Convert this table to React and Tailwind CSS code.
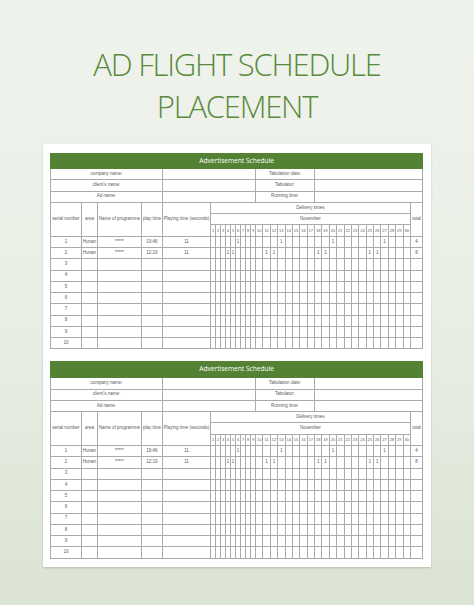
import React from 'react';

const days = Array.from({ length: 30 }, (_, i) => i + 1);

// data rows: marks are the days carrying a "1"
const entries = [
  { no: 1, area: 'Hunan', name: '*****', play: '19:46', secs: '11', marks: [6, 13, 20, 27], total: 4 },
  { no: 2, area: 'Hunan', name: '*****', play: '12:19', secs: '11', marks: [4, 5, 11, 12, 18, 19, 25, 26], total: 8 },
  ...Array.from({ length: 8 }, (_, i) => ({ no: i + 3, marks: [] })),
];

const cell = 'border border-[#a8aca6] p-0 text-center align-middle leading-none';

const Schedule = ({ headH = 'h-[15px]' }) => (
  <table className="w-[372px] table-fixed border-collapse font-['Liberation_Sans',Arial,sans-serif] text-[4.5px] text-[#5a5a5a]">
    <colgroup>
      <col className="w-[31px]" />
      <col className="w-[16px]" />
      <col className="w-[44px]" />
      <col className="w-[21px]" />
      <col className="w-[48px]" />
      {days.map((d) => (
        <col key={d} className={d < 10 ? 'w-[5px]' : 'w-[7.38px]'} />
      ))}
      <col className="w-[12px]" />
    </colgroup>
    <tbody>
      <tr className={headH}>
        <td colSpan={36} className="border border-[#548235] bg-[#548235] p-0 text-center align-middle font-['Open_Sans',sans-serif] text-[6.6px] font-normal leading-none text-white">
          Advertisement Schedule
        </td>
      </tr>
      {[
        ['company name:', 'Tabulation date:'],
        ["client's name:", 'Tabulator:'],
        ['Ad name:', 'Running time:'],
      ].map(([left, right]) => (
        <tr key={left} className="h-[11.3px]">
          <td colSpan={4} className={cell}>{left}</td>
          <td colSpan={10} className={cell}></td>
          <td colSpan={8} className={cell}>{right}</td>
          <td colSpan={14} className={cell}></td>
        </tr>
      ))}
      <tr className="h-[11.3px]">
        <td rowSpan={3} className={cell}>serial number</td>
        <td rowSpan={3} className={cell}>area</td>
        <td rowSpan={3} className={cell}>Name of programme</td>
        <td rowSpan={3} className={cell}>play time</td>
        <td rowSpan={3} className={cell}>Playing time (seconds)</td>
        <td colSpan={30} className={cell}>Delivery times</td>
        <td rowSpan={3} className={cell}>total</td>
      </tr>
      <tr className="h-[11.3px]">
        <td colSpan={30} className={cell}>November</td>
      </tr>
      <tr className="h-[11.3px]">
        {days.map((d) => (
          <td key={d} className={`${cell} text-[4px]`}>{d}</td>
        ))}
      </tr>
      {entries.map((r) => (
        <tr key={r.no} className="h-[11.25px]">
          <td className={cell}>{r.no}</td>
          <td className={cell}>{r.area}</td>
          <td className={cell}>{r.name}</td>
          <td className={cell}>{r.play}</td>
          <td className={cell}>{r.secs}</td>
          {days.map((d) => (
            <td key={d} className={cell}>{r.marks.includes(d) ? 1 : ''}</td>
          ))}
          <td className={cell}>{r.total}</td>
        </tr>
      ))}
    </tbody>
  </table>
);

export default function App() {
  return (
    <div className="min-h-[605px] w-full overflow-hidden bg-gradient-to-b from-[#eff3ed] via-[#eaefe6] to-[#dbe4d3] pt-[43px]">
      <h1 className="text-center font-['Open_Sans',sans-serif] text-[31px] font-[350] leading-[42px] tracking-[-0.04em] text-[#5a8a3c]">
        AD FLIGHT SCHEDULE
        <br />
        PLACEMENT
      </h1>

      <div className="mx-auto mt-[17px] flex w-[388px] flex-col gap-[12px] bg-white pb-[8px] pl-[7px] pr-[9px] pt-[9px] shadow-[0_1px_2px_rgba(60,80,50,0.25)]">
        <Schedule headH="h-[15px]" />
        <Schedule headH="h-[16px]" />
      </div>
    </div>
  );
}
